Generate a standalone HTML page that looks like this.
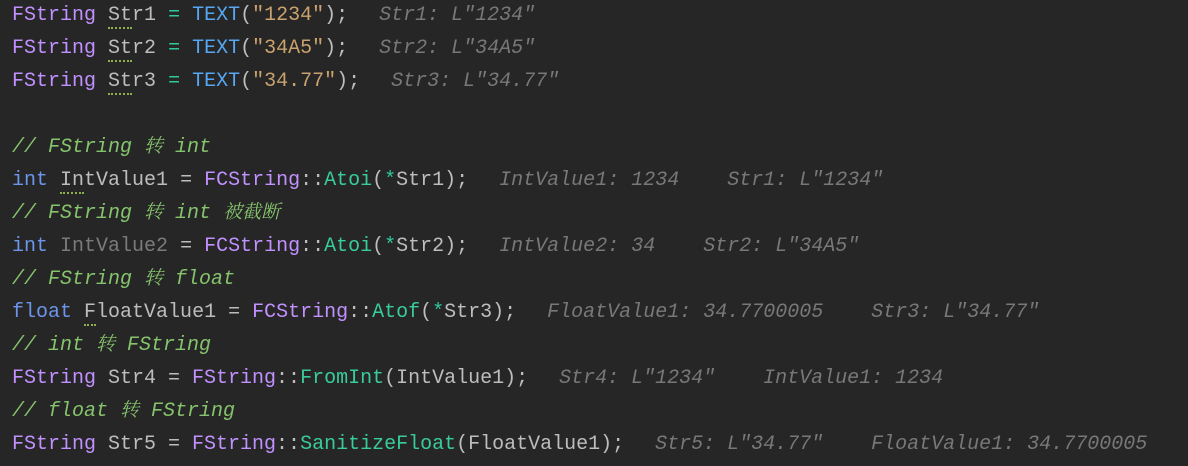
<!DOCTYPE html>
<html><head><meta charset="utf-8"><style>
html,body{margin:0;padding:0;background:#262626;width:1188px;height:466px;overflow:hidden}
.c{font-family:"Liberation Mono","Noto Sans CJK SC",monospace;font-size:20px;color:#bdbdbd;padding-left:12px;margin-top:-1px}
.l{height:33px;line-height:33px;white-space:pre;overflow:hidden}
.l span{line-height:0}
.t{color:#c191ff}.o{color:#2fc9a0}.m{color:#56a8f5}.s{color:#c9a26d}.k{color:#6c95eb}
.f{color:#39cc9b}.cm{color:#85c46c;font-style:italic}.g{color:#7a7a7a}
.h{color:#787878;font-style:italic;margin-left:31px}.h2{margin-left:48px}
.u{border-bottom:2px dotted #8db04a}
.cj{font-family:"Noto Serif CJK SC","Noto Sans CJK SC",serif;font-size:19px}
</style></head><body><div class="c">
<div class="l"><span class="t">FString</span> <span class="u">St</span>r1 <span class="o">=</span> <span class="m">TEXT</span>(<span class="s">"1234"</span>);<span class="h">Str1: L"1234"</span></div>
<div class="l"><span class="t">FString</span> <span class="u">St</span>r2 <span class="o">=</span> <span class="m">TEXT</span>(<span class="s">"34A5"</span>);<span class="h">Str2: L"34A5"</span></div>
<div class="l"><span class="t">FString</span> <span class="u">St</span>r3 <span class="o">=</span> <span class="m">TEXT</span>(<span class="s">"34.77"</span>);<span class="h">Str3: L"34.77"</span></div>
<div class="l"> </div>
<div class="l cm">// FString <span class="cj">转</span> int</div>
<div class="l"><span class="k">int</span> <span class="u">In</span>tValue1 = <span class="t">FCString</span>::<span class="f">Atoi</span>(<span class="o">*</span>Str1);<span class="h">IntValue1: 1234</span><span class="h h2">Str1: L"1234"</span></div>
<div class="l cm">// FString <span class="cj">转</span> int <span class="cj">被截断</span></div>
<div class="l"><span class="k">int</span> <span class="g">IntValue2</span> = <span class="t">FCString</span>::<span class="f">Atoi</span>(<span class="o">*</span>Str2);<span class="h">IntValue2: 34</span><span class="h h2">Str2: L"34A5"</span></div>
<div class="l cm">// FString <span class="cj">转</span> float</div>
<div class="l"><span class="k">float</span> <span class="u">F</span>loatValue1 = <span class="t">FCString</span>::<span class="f">Atof</span>(<span class="o">*</span>Str3);<span class="h">FloatValue1: 34.7700005</span><span class="h h2">Str3: L"34.77"</span></div>
<div class="l cm">// int <span class="cj">转</span> FString</div>
<div class="l"><span class="t">FString</span> Str4 = <span class="t">FString</span>::<span class="f">FromInt</span>(IntValue1);<span class="h">Str4: L"1234"</span><span class="h h2">IntValue1: 1234</span></div>
<div class="l cm">// float <span class="cj">转</span> FString</div>
<div class="l"><span class="t">FString</span> Str5 = <span class="t">FString</span>::<span class="f">SanitizeFloat</span>(FloatValue1);<span class="h">Str5: L"34.77"</span><span class="h h2">FloatValue1: 34.7700005</span></div>
</div></body></html>
